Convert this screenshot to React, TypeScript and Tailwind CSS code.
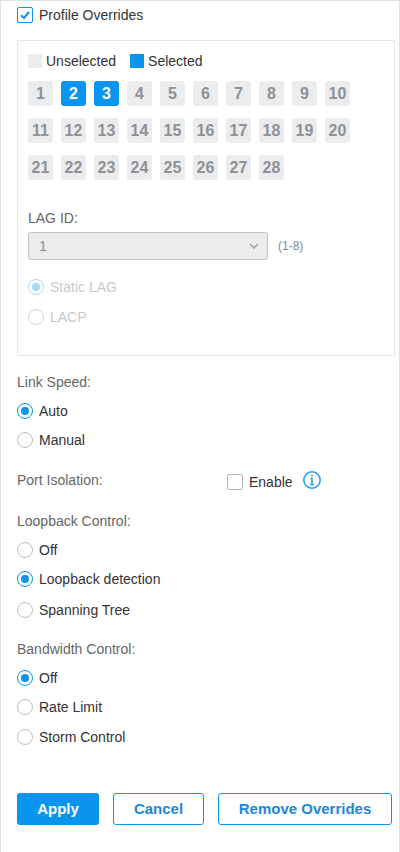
const ports = Array.from({ length: 28 }, (_, i) => i + 1);
const selected = [2, 3];

function Radio({
  label,
  checked,
  disabled,
  className = "",
}: {
  label: string;
  checked?: boolean;
  disabled?: boolean;
  className?: string;
}) {
  const ring = disabled
    ? checked
      ? "border-[#a6d9fa]"
      : "border-[#d4d4d4]"
    : checked
      ? "border-[#0995ee]"
      : "border-[#bdbdbd]";
  return (
    <div className={`flex h-4 items-center ${className}`}>
      <span className={`flex h-4 w-4 items-center justify-center rounded-full border ${ring}`}>
        {checked && (
          <span className={`h-2 w-2 rounded-full ${disabled ? "bg-[#a6d9fa]" : "bg-[#0995ee]"}`} />
        )}
      </span>
      <span className={`ml-[6px] text-sm ${disabled ? "text-[#c9c9c9]" : "text-[#333]"}`}>{label}</span>
    </div>
  );
}

function Label({ children }: { children: string }) {
  return <div className="h-4 text-sm leading-4 text-[#666]">{children}</div>;
}

export default function App() {
  return (
    <div className="h-[852px] w-[400px] overflow-hidden bg-white font-['Liberation_Sans',Arial,sans-serif]">
      <div className="h-[852px] w-[400px] border-x border-t border-[#e0e0e0] pt-[6px] pl-4">
        <div className="flex h-4 items-center">
          <span className="flex h-4 w-4 items-center justify-center rounded-[2px] border border-[#0995ee]">
            <svg viewBox="0 0 12 12" className="h-3 w-3" fill="none" stroke="#0995ee" strokeWidth="2">
              <path d="M2 6.2 L5 9 L10 3" />
            </svg>
          </span>
          <span className="ml-[6px] text-sm text-[#333]">Profile Overrides</span>
        </div>

        <div className="mt-[17px] h-[316px] w-[378px] border border-[#e8e8e8] px-[10px] pt-[13px]">
          <div className="flex h-[14px] items-center text-sm text-[#333]">
            <span className="h-[14px] w-[14px] bg-[#ebecee]" />
            <span className="ml-1">Unselected</span>
            <span className="ml-[14px] h-[14px] w-[14px] bg-[#0995ee]" />
            <span className="ml-1">Selected</span>
          </div>

          <div className="mt-[13px] grid w-[322px] grid-cols-[repeat(10,25px)] gap-x-2 gap-y-3">
            {ports.map((p) => (
              <div
                key={p}
                className={`flex h-[25px] w-[25px] items-center justify-center rounded-[3px] text-base font-bold ${
                  selected.includes(p) ? "bg-[#0995ee] text-white" : "bg-[#ebecee] text-[#8e9195]"
                }`}
              >
                {p}
              </div>
            ))}
          </div>

          <div className="mt-[30px] h-4 text-sm leading-4 text-[#666]">LAG ID:</div>
          <div className="mt-[6px] flex items-center">
            <div className="flex h-7 w-[240px] items-center justify-between rounded-[3px] border border-[#bfc1c4] bg-[#ebecee] pr-[8px] pl-[10px] text-sm text-[#8a8d91]">
              <span>1</span>
              <svg viewBox="0 0 10 6" className="h-[6px] w-[10px]" fill="none" stroke="#a3a5a8" strokeWidth="1.6">
                <path d="M1 1 L5 5 L9 1" />
              </svg>
            </div>
            <span className="ml-[10px] text-xs text-[#7d8a99]">(1-8)</span>
          </div>

          <div className="mt-[19px] flex flex-col gap-[14px]">
            <Radio label="Static LAG" checked disabled />
            <Radio label="LACP" disabled />
          </div>
        </div>

        <div className="mt-[18px]">
          <Label>Link Speed:</Label>
          <div className="mt-[13px] flex flex-col gap-[13px]">
            <Radio label="Auto" checked />
            <Radio label="Manual" />
          </div>
        </div>

        <div className="mt-[24px] flex h-4 items-center">
          <div className="w-[210px]">
            <Label>Port Isolation:</Label>
          </div>
          <span className="mt-1 h-4 w-4 rounded-[2px] border border-[#b5b5b5]" />
          <span className="mt-1 ml-[6px] text-sm text-[#333]">Enable</span>
          <svg viewBox="0 0 18 18" className="ml-[10px] h-[18px] w-[18px]" fill="none" stroke="#1f9bf0">
            <circle cx="9" cy="9" r="8.2" strokeWidth="1.5" />
            <path d="M9 7.5 V13.5 M7.2 13.6 H10.8 M7.4 7.6 H9.5" strokeWidth="1.5" />
            <circle cx="9" cy="4.8" r="1" fill="#1f9bf0" stroke="none" />
          </svg>
        </div>

        <div className="mt-[25px]">
          <Label>Loopback Control:</Label>
          <div className="mt-[13px] flex flex-col">
            <Radio label="Off" />
            <Radio label="Loopback detection" checked className="mt-[13px]" />
            <Radio label="Spanning Tree" className="mt-[15px]" />
          </div>
        </div>

        <div className="mt-[23px]">
          <Label>Bandwidth Control:</Label>
          <div className="mt-[13px] flex flex-col">
            <Radio label="Off" checked />
            <Radio label="Rate Limit" className="mt-[13px]" />
            <Radio label="Storm Control" className="mt-[14px]" />
          </div>
        </div>

        <div className="mt-[48px] flex h-8 gap-[14px] text-[15px] font-bold">
          <button className="w-[82px] rounded-[3px] bg-[#0995ee] text-white">Apply</button>
          <button className="w-[91px] rounded-[3px] border border-[#0995ee] text-[#1c87d9]">Cancel</button>
          <button className="w-[174px] rounded-[3px] border border-[#0995ee] text-[#1c87d9]">Remove Overrides</button>
        </div>
      </div>
    </div>
  );
}
